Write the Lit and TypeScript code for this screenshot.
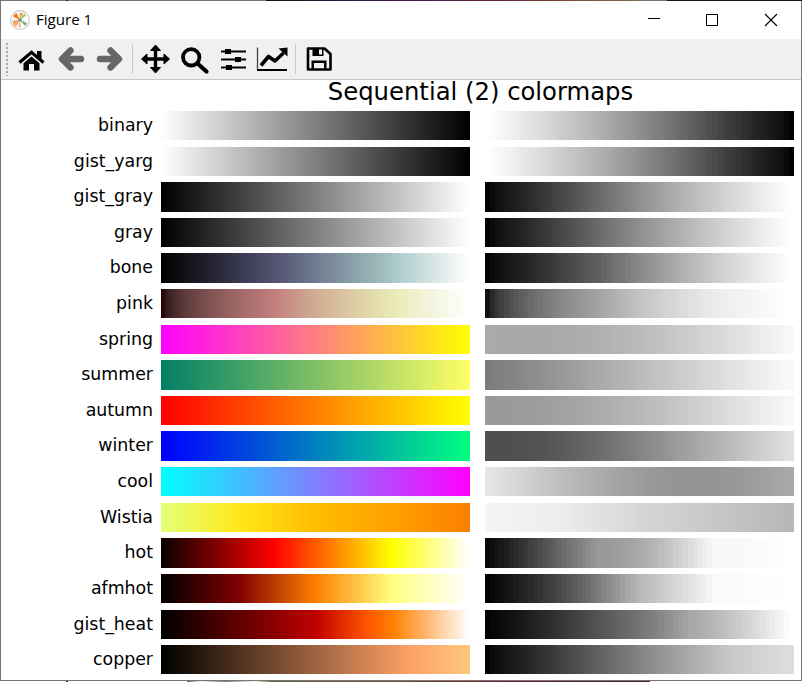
import { LitElement, html, css, svg } from "lit";
import { customElement } from "lit/decorators.js";

type RGB = [number, number, number];
const clip = (v: number) => Math.min(1, Math.max(0, v));
const seg = (x: number, pts: number[][]) => {
  for (let i = 1; i < pts.length; i++) {
    if (x <= pts[i][0]) {
      const [a, b] = pts[i - 1];
      const [c, d] = pts[i];
      return b + ((x - a) / (c - a)) * (d - b);
    }
  }
  return pts[pts.length - 1][1];
};
const hot = (x: number): RGB => [
  seg(x, [[0, 0.0416], [0.365079, 1], [1, 1]]),
  seg(x, [[0, 0], [0.365079, 0], [0.746032, 1], [1, 1]]),
  seg(x, [[0, 0], [0.746032, 0], [1, 1]]),
];
const pinkNodes: RGB[] = Array.from({ length: 64 }, (_, i) => {
  const g = i / 63;
  const r = i < 24 ? (i + 1) / 24 : 1;
  const gg = i < 24 ? 0 : i < 48 ? (i - 23) / 24 : 1;
  const b = i < 48 ? 0 : (i - 47) / 16;
  return [r, gg, b].map((h) => Math.sqrt((2 * g + h) / 3)) as RGB;
});
const pink = (x: number): RGB => {
  const p = x * 63;
  const i = Math.min(62, Math.floor(p));
  const t = p - i;
  return [0, 1, 2].map((k) => pinkNodes[i][k] * (1 - t) + pinkNodes[i + 1][k] * t) as RGB;
};
const wistia = [[228, 255, 122], [255, 232, 26], [255, 189, 0], [255, 160, 0], [252, 127, 0]];

const maps: [string, (x: number) => RGB][] = [
  ["binary", (x) => [1 - x, 1 - x, 1 - x]],
  ["gist_yarg", (x) => [1 - x, 1 - x, 1 - x]],
  ["gist_gray", (x) => [x, x, x]],
  ["gray", (x) => [x, x, x]],
  ["bone", (x) => [
    seg(x, [[0, 0], [0.746032, 0.652778], [1, 1]]),
    seg(x, [[0, 0], [0.365079, 0.319444], [0.746032, 0.777778], [1, 1]]),
    seg(x, [[0, 0], [0.365079, 0.444444], [1, 1]]),
  ]],
  ["pink", pink],
  ["spring", (x) => [1, x, 1 - x]],
  ["summer", (x) => [x, 0.5 + x / 2, 0.4]],
  ["autumn", (x) => [1, x, 0]],
  ["winter", (x) => [0, x, 1 - x / 2]],
  ["cool", (x) => [x, 1 - x, 1]],
  ["Wistia", (x) => {
    const p = x * 4;
    const i = Math.min(3, Math.floor(p));
    const t = p - i;
    return [0, 1, 2].map((k) => (wistia[i][k] * (1 - t) + wistia[i + 1][k] * t) / 255) as RGB;
  }],
  ["hot", hot],
  ["afmhot", (x) => [clip(2 * x), clip(2 * x - 0.5), clip(2 * x - 1)]],
  ["gist_heat", (x) => [clip(1.5 * x), clip(2 * x - 1), clip(4 * x - 3)]],
  ["copper", (x) => [seg(x, [[0, 0], [0.809524, 1], [1, 1]]), x * 0.7812, x * 0.4975]],
];

// CAM02-UCS lightness
const mul = (m: number[][], v: number[]) => m.map((r) => r[0] * v[0] + r[1] * v[1] + r[2] * v[2]);
const CAT = [[0.7328, 0.4296, -0.1624], [-0.7036, 1.6975, 0.0061], [0.003, 0.0136, 0.9834]];
const CATI = [[1.096124, -0.278869, 0.182745], [0.454369, 0.473533, 0.072098], [-0.009628, -0.005698, 1.015326]];
const HPE = [[0.38971, 0.68898, -0.07868], [-0.22981, 1.1834, 0.04641], [0, 0, 1]];
const SRGB = [[0.4124, 0.3576, 0.1805], [0.2126, 0.7152, 0.0722], [0.0193, 0.1192, 0.9505]];
const LA = 64 / Math.PI / 5;
const W = [95.047, 100, 108.883];
const D = 1 - (1 / 3.6) * Math.exp((-LA - 42) / 92);
const RW = mul(CAT, W);
const DR = RW.map((v) => (D * 100) / v + 1 - D);
const k = 1 / (5 * LA + 1);
const FL = 0.2 * k ** 4 * 5 * LA + 0.1 * (1 - k ** 4) ** 2 * Math.cbrt(5 * LA);
const nn = 0.2;
const zz = 1.48 + Math.sqrt(nn);
const Nbb = 0.725 * (1 / nn) ** 0.2;
const achromatic = (xyz: number[]) => {
  const rc = mul(CAT, xyz).map((v, i) => v * DR[i]);
  const rp = mul(HPE, mul(CATI, rc));
  const ra = rp.map((v) => {
    const q = (FL * Math.abs(v)) / 100;
    const t = q ** 0.42;
    return (Math.sign(v) * 400 * t) / (27.13 + t) + 0.1;
  });
  return (2 * ra[0] + ra[1] + ra[2] / 20 - 0.305) * Nbb;
};
const AW = achromatic(W);
const lightness = (c: RGB) => {
  const lin = c.map((v) => (v <= 0.04045 ? v / 12.92 : ((v + 0.055) / 1.055) ** 2.4));
  const xyz = mul(SRGB, lin).map((v) => v * 100);
  const a = Math.max(0, achromatic(xyz));
  const J = 100 * (a / AW) ** (0.69 * zz);
  return (1.7 * J) / (1 + 0.007 * J);
};

const steps = (n: number, col: (x: number) => string) => {
  const parts: string[] = [];
  for (let i = 0; i < n; i++) {
    const c = col(i / (n - 1));
    parts.push(`${c} ${((i / n) * 100).toFixed(3)}%`, `${c} ${(((i + 1) / n) * 100).toFixed(3)}%`);
  }
  return `linear-gradient(90deg, ${parts.join(",")})`;
};
const to8 = (v: number) => Math.round(clip(v) * 255);
const rows = maps.map(([name, f]) => ({
  name,
  left: steps(256, (x) => {
    const c = f(Math.floor(x * 255.999) / 255);
    return `rgb(${to8(c[0])},${to8(c[1])},${to8(c[2])})`;
  }),
  right: steps(64, (x) => {
    const g = Math.round(clip(lightness(f(x)) / 100) * 255);
    return `rgb(${g},${g},${g})`;
  }),
}));

const ICONS = {
  home: svg`<path d="M7.500 19.500 19.500 9.300 31.500 19.500" fill="none" stroke="#000" stroke-width="3.200"/><path d="M25 8h4.500v8.500l-4.500-3.700z" fill="#000"/><path d="M11.500 20.300 19.500 13.500l8 6.800V27.500H22v-6.500h-5v6.500h-5.500z" fill="#000"/>`,
  back: svg`<path d="M30 16H12M19.500 7.500 11 16l8.500 8.500" fill="none" stroke="#666" stroke-width="6.400" stroke-linecap="round" stroke-linejoin="round"/>`,
  forward: svg`<path d="M10 16h18M20.500 7.500 29 16l-8.500 8.500" fill="none" stroke="#666" stroke-width="6.400" stroke-linecap="round" stroke-linejoin="round"/>`,
  move: svg`<path d="M19.500 6v20M9 16h21" stroke="#000" stroke-width="3.400"/><path d="M19.500 2l5 5.500h-10zM19.500 30l5-5.500h-10zM5.500 16l5.500-5v10zM33.500 16 28 11v10z" fill="#000" stroke="#000" stroke-width="1" stroke-linejoin="round"/>`,
  zoom: svg`<circle cx="16.200" cy="14.300" r="8.200" fill="none" stroke="#000" stroke-width="3.800"/><path d="M22.500 20.500 31.500 28.500" stroke="#000" stroke-width="4.200" stroke-linecap="round"/>`,
  sliders: svg`<path d="M7 8.500h25M7 16.500h25M7 24.500h25" stroke="#000" stroke-width="1.800"/><path d="M11 6h6v5h-6zM21 14h6v5h-6zM12 22h6v5h-6z" fill="#000"/>`,
  chart: svg`<path d="M4.500 4.500V27" fill="none" stroke="#444" stroke-width="1.300"/><path d="M4 27H34" fill="none" stroke="#000" stroke-width="2"/><path d="M8 22.500 15.500 13.500 22 18 30.500 10" fill="none" stroke="#000" stroke-width="3.600" stroke-linejoin="round"/><path d="M25.500 5.500 34.500 4.500v9z" fill="#000"/>`,
  save: svg`<path d="M9 5.500h16.500l6 5.500v15.500H9z" fill="none" stroke="#000" stroke-width="2.600" stroke-linejoin="round"/><path d="M13.500 5h11v8h-11zM12.500 17.500h15V27h-2.500v-7h-10v7h-2.500z" fill="#000"/><path d="M20 6.500h3v5h-3z" fill="#f0f0f0"/>`,
};

const tools: (keyof typeof ICONS | "sep")[] = ["home", "back", "forward", "sep", "move", "zoom", "sliders", "chart", "sep", "save"];

@customElement("app-root")
export class AppRoot extends LitElement {
  static styles = css`
    :host { display: block; width: 802px; height: 682px; overflow: hidden; background: #fff; font-family: "DejaVu Sans", sans-serif; }
    .frame { display: flex; flex-direction: column; height: 682px; }
    .strip { flex: none; height: 1px; }
    .strip.top { background: linear-gradient(90deg, #777 0, #777 66px, #222 66px, #222 68px, #777 68px, #777 266px, #141414 266px, #2a1a3c 340px, #3d1c4c 400px, #66243e 500px, #7a4630 560px, #78704e 640px, #777 650px, #777 667px, #141414 667px); }
    .strip.bottom { background: linear-gradient(90deg, #fff 0, #fff 66px, #333 66px, #333 68px, #fff 68px, #fff 187px, #555 187px, #fff 200px, #777 225px, #fff 255px, #6c6a40 271px, #7a4a30 400px, #6e2430 500px, #441828 650px, #fff 650px); }
    .window { flex: 1; display: flex; flex-direction: column; min-height: 0; border: 1px solid #777; border-top: 0; }
    .title { flex: none; height: 38px; display: flex; align-items: center; background: #fff; padding-right: 1px; }
    .logo { width: 20px; height: 20px; margin-left: 9px; flex: none; }
    .name { margin: -2px 0 0 6px; font: 15.100px/20px "Open Sans", sans-serif; color: #000; flex: 1; }
    .ctl { flex: none; width: 58px; height: 38px; display: flex; align-items: center; justify-content: center; }
    .ctl + .ctl + .ctl { margin-left: 1px; }
    .ctl svg { width: 14px; height: 14px; display: block; }
    .toolbar { flex: none; height: 40px; display: flex; align-items: center; background: #f0f0f0; border-bottom: 1px solid #c8c8c8; }
    .grip { flex: none; width: 2px; height: 33px; margin: 0 4px 0 5px; background: repeating-linear-gradient(180deg, #a8a8a8 0, #a8a8a8 2px, transparent 2px, transparent 4px); }
    .tool { flex: none; width: 39px; height: 32px; display: block; }
    .sep { flex: none; width: 1px; height: 30px; margin: 0 3px; background: #c6c6c6; }
    .canvas { flex: 1; min-height: 0; background: #fff; }
    .heading { height: 31px; padding-left: 160px; margin-right: 1px; text-align: center; font-size: 24.300px; line-height: 23px; color: #000; white-space: nowrap; }
    .grid { display: grid; grid-template-columns: 160px 309px 324px; grid-auto-rows: 29.300px; row-gap: 6.320px; }
    .label { font-size: 17.360px; line-height: 29.300px; text-align: right; padding-right: 8px; color: #000; }
    .bar { height: 100%; }
    .bar.r { margin-left: 15px; width: 309px; }
  `;

  render() {
    return html`
      <div class="frame">
        <div class="strip top"></div>
        <div class="window">
          <div class="title">
            <svg class="logo" viewBox="0 0 20 20">
              <circle cx="10" cy="10" r="9.300" fill="#fff" stroke="#c9c9c9" stroke-width="1.200"/>
              <path d="M10 10 3 6.500A8 8 0 0 1 6.500 3z" fill="#f07c1e"/>
              <path d="M10 10 2.500 10.500A8 8 0 0 0 6 17z" fill="#f2a766"/>
              <path d="M10 10 9.500 2.500 13 3z" fill="#e8a33c"/>
              <path d="M10 10 14 3.500 16 5.500z" fill="#8cc152"/>
              <path d="M10 10 17 13 15 16z" fill="#7fb069"/>
              <path d="M10 10 11 17.500 8 17z" fill="#f0b48a"/>
              <circle cx="10" cy="10" r="1.800" fill="#6f8fa8"/>
            </svg>
            <div class="name">Figure 1</div>
            <div class="ctl"><svg viewBox="0 0 14 14"><path d="M1 5.500h12" stroke="#000" fill="none"/></svg></div>
            <div class="ctl"><svg viewBox="0 0 14 14"><path d="M1.500 1.500h11v11h-11z" stroke="#000" fill="none"/></svg></div>
            <div class="ctl"><svg viewBox="0 0 14 14"><path d="M1 1l12 12M13 1 1 13" stroke="#000" stroke-width="1.100" fill="none"/></svg></div>
          </div>
          <div class="toolbar">
            <div class="grip"></div>
            ${tools.map((t) =>
              t === "sep"
                ? html`<div class="sep"></div>`
                : html`<svg class="tool" viewBox="0 0 39 32">${ICONS[t]}</svg>`
            )}
          </div>
          <div class="canvas">
            <div class="heading">Sequential (2) colormaps</div>
            <div class="grid">
              ${rows.map(
                (r) => html`
                  <div class="label">${r.name}</div>
                  <div class="bar" style="background:${r.left}"></div>
                  <div class="bar r" style="background:${r.right}"></div>
                `
              )}
            </div>
          </div>
        </div>
        <div class="strip bottom"></div>
      </div>
    `;
  }
}
